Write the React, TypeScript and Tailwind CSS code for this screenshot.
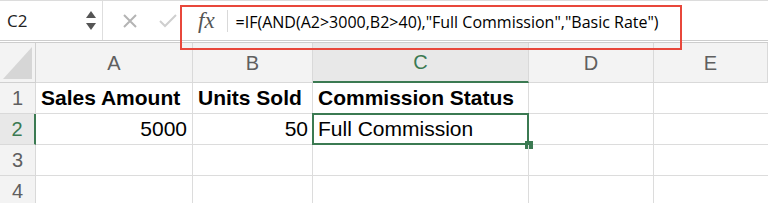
import { Fragment } from 'react';

const COLS = ['A', 'B', 'C', 'D', 'E'];

const ROWS: { a: string; b: string; c: string; bold?: boolean }[] = [
  { a: 'Sales Amount', b: 'Units Sold', c: 'Commission Status', bold: true },
  { a: '5000', b: '50', c: 'Full Commission' },
  { a: '', b: '', c: '' },
  { a: '', b: '', c: '' },
];

export default function App() {
  return (
    <div className="relative w-[768px] h-[203px] overflow-hidden bg-white font-['Liberation_Sans',Arial,sans-serif]">
      {/* formula bar */}
      <div className="flex h-[43px] items-center border-t border-[#dcdcdc] border-b-[3px] border-double border-b-[#cdcdcd]">
        <div className="flex w-[103px] h-full items-center border-r border-[#dedede]">
          <span className="pl-[7px] flex-1 text-[17px] text-[#222] font-['Open_Sans',sans-serif]">C2</span>
          <div className="flex flex-col items-center gap-[5px] pr-[6px] text-[#555]">
            <svg width="10" height="7" viewBox="0 0 10 7">
              <path d="M5 0 L10 7 L0 7 Z" fill="currentColor" />
            </svg>
            <svg width="10" height="7" viewBox="0 0 10 7">
              <path d="M0 0 L10 0 L5 7 Z" fill="currentColor" />
            </svg>
          </div>
        </div>
        <div className="flex items-center gap-[21px] pl-[19px] text-[#b4b4b4]">
          <svg width="16" height="16" viewBox="0 0 16 16">
            <path d="M2 2 L14 14 M14 2 L2 14" stroke="currentColor" strokeWidth="2" />
          </svg>
          <svg width="18" height="14" viewBox="0 0 18 14" className="text-[#cfcfcf]">
            <path d="M1 7 L6 12 L17 1" stroke="currentColor" strokeWidth="2" fill="none" />
          </svg>
        </div>
        <div className="flex items-center h-full pl-[21px]">
          <span className="italic text-[23px] text-[#555] font-['Liberation_Serif',serif] leading-none">fx</span>
          <div className="ml-[12px] w-px h-[22px] bg-[#d9d9d9]" />
          <span className="ml-[8px] pt-[3px] text-[16px] text-black font-['Open_Sans',sans-serif] whitespace-nowrap">
            =IF(AND(A2&gt;3000,B2&gt;40),"Full Commission","Basic Rate")
          </span>
        </div>
      </div>

      {/* grid */}
      <div className="grid grid-cols-[36px_157px_120px_216px_125px_1fr] grid-rows-[40px_31px_31px_31px_31px]">
        <div className="relative bg-[#f3f3f3] border-r border-b border-[#d0d0d0]">
          <svg className="absolute right-[3px] bottom-[3px]" width="29" height="32" viewBox="0 0 29 32">
            <path d="M29 0 L29 32 L0 32 Z" fill="#d6d6d6" />
          </svg>
        </div>
        {COLS.map((c) => (
          <div
            key={c}
            className={
              c === 'C'
                ? 'flex items-center justify-center bg-[#e8e8e8] border-r border-[#d9d9d9] border-b-2 border-b-[#3b7a52] text-[20px] text-[#3b7a52]'
                : 'flex items-center justify-center bg-[#f3f3f3] border-r border-b border-[#d9d9d9] text-[20px] text-[#5f5f5f]'
            }
          >
            {c}
          </div>
        ))}

        {ROWS.map((r, i) => (
          <Fragment key={i}>
            <div
              className={
                i === 1
                  ? 'flex items-center justify-center bg-[#e8e8e8] border-r-2 border-r-[#3b7a52] border-b border-b-[#d9d9d9] text-[20px] text-[#3b7a52]'
                  : 'flex items-center justify-center bg-[#f3f3f3] border-r border-b border-[#d9d9d9] text-[20px] text-[#5f5f5f]'
              }
            >
              {i + 1}
            </div>
            <div
              className={`flex items-center border-r border-b border-[#dcdcdc] text-[21px] text-black whitespace-nowrap ${
                r.bold ? 'font-bold pl-[5px]' : 'justify-end pr-[5px]'
              }`}
            >
              {r.a}
            </div>
            <div
              className={`flex items-center border-r border-b border-[#dcdcdc] text-[21px] text-black whitespace-nowrap ${
                r.bold ? 'font-bold pl-[5px]' : 'justify-end pr-[4px]'
              }`}
            >
              {r.b}
            </div>
            <div
              className={`relative flex items-center pl-[5px] border-r border-b border-[#dcdcdc] text-[21px] text-black whitespace-nowrap ${
                r.bold ? 'font-bold' : ''
              }`}
            >
              {r.c}
              {i === 1 && (
                <>
                  <div className="absolute left-[-1px] top-[-1px] right-[-1px] bottom-[-1px] border-2 border-[#3b7a52]" />
                  <div className="absolute right-[-5px] bottom-[-5px] w-[8px] h-[8px] bg-[#3b7a52]" />
                </>
              )}
            </div>
            <div className="border-r border-b border-[#dcdcdc]" />
            <div className="border-b border-[#dcdcdc]" />
          </Fragment>
        ))}
      </div>

      {/* highlight around the formula */}
      <div className="absolute left-[180px] top-[5px] w-[502px] h-[45px] border-2 border-[#e8473b] pointer-events-none" />
    </div>
  );
}
